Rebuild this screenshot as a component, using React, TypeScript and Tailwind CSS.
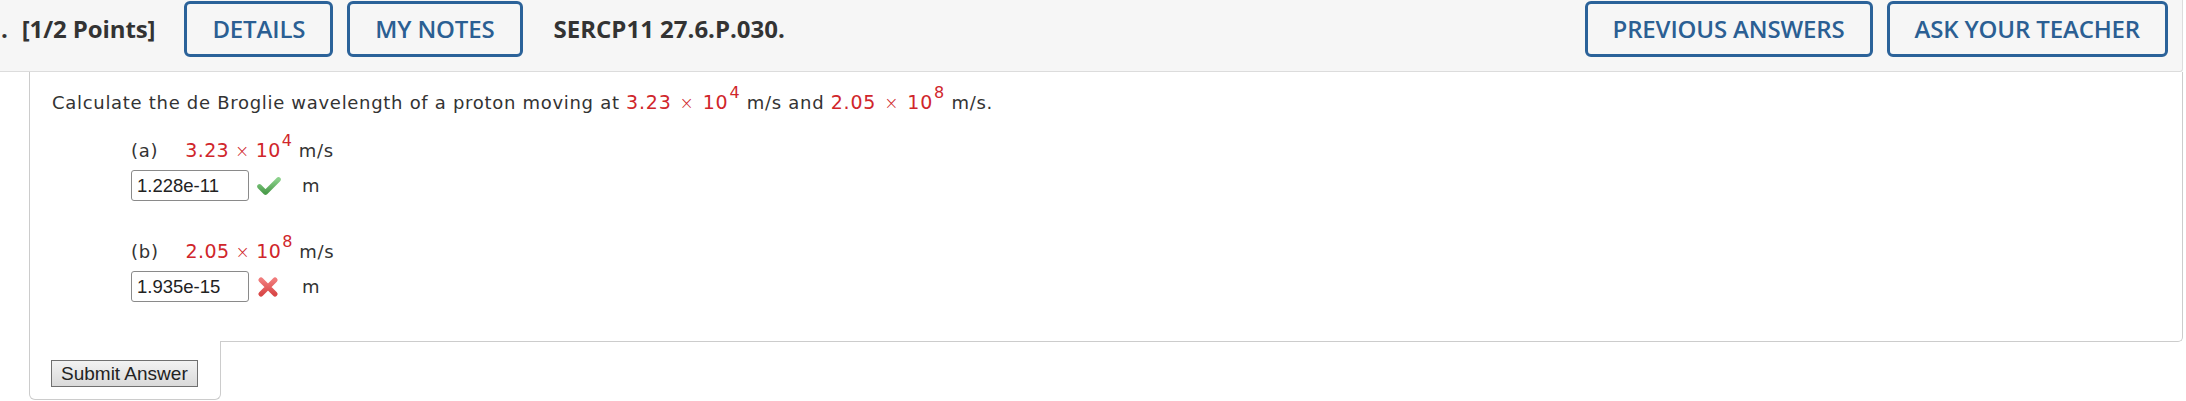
import React from "react";

const headerFont = { fontFamily: '"Open Sans", "Liberation Sans", sans-serif' };

const CheckMark: React.FC = () => (
  <svg width="24" height="20" viewBox="0 0 24 20" className="shrink-0">
    <defs>
      <linearGradient id="okGrad" x1="0" y1="0" x2="0" y2="1">
        <stop offset="0" stopColor="#8ad08a" />
        <stop offset="1" stopColor="#4c9d4c" />
      </linearGradient>
    </defs>
    <path
      d="M2.5 10.5 L8.5 16.5 L21.5 3.5"
      fill="none"
      stroke="url(#okGrad)"
      strokeWidth="4.6"
      strokeLinecap="round"
      strokeLinejoin="round"
    />
  </svg>
);

const CrossMark: React.FC = () => (
  <svg width="22" height="22" viewBox="0 0 22 22" className="shrink-0">
    <defs>
      <linearGradient id="badGrad" x1="0" y1="0" x2="0" y2="1">
        <stop offset="0" stopColor="#f07a7a" />
        <stop offset="1" stopColor="#d94848" />
      </linearGradient>
    </defs>
    <path
      d="M4 4 L18 18 M18 4 L4 18"
      fill="none"
      stroke="url(#badGrad)"
      strokeWidth="5.2"
      strokeLinecap="round"
    />
  </svg>
);

const HeaderButton: React.FC<{ label: string }> = ({ label }) => (
  <button
    className="h-[56px] px-[25px] rounded-[6px] border-[3px] border-[#2b6299] bg-[#f6f6f6] text-[24px] font-semibold text-[#2b5f93] tracking-[-0.15px]"
    style={headerFont}
  >
    {label}
  </button>
);

// red value like 3.23 × 10^4
const Value: React.FC<{ num: string; exp: string; wide?: boolean }> = ({ num, exp, wide }) => (
  <span className={`text-[#d0262b] text-[19px] ${wide ? "tracking-[0.8px]" : "tracking-[0.4px]"}`}>
    {num}
    <span className={`${wide ? "mx-[8px]" : "mx-[6px]"} text-[17px] font-light`}>×</span>
    10
    <sup className="ml-[1px] text-[16px] -top-[0.7em]">{exp}</sup>
  </span>
);

const Part: React.FC<{
  letter: string;
  num: string;
  exp: string;
  answer: string;
  correct: boolean;
}> = ({ letter, num, exp, answer, correct }) => (
  <div className="ml-[79px]">
    <div className="leading-[27px] whitespace-pre">
      <span>({letter})</span>
      <span className="ml-[27px]">
        <Value num={num} exp={exp} />
      </span>{" "}
      m/s
    </div>
    <div className="flex items-center mt-[5px]">
      <div
        className="w-[118px] h-[31px] border border-[#8a8a8a] rounded-[3px] bg-white px-[5px] flex items-center text-[18.5px] tracking-normal text-[#222]"
        style={{ fontFamily: '"Liberation Sans", Arial, sans-serif' }}
      >
        {answer}
      </div>
      <div className="w-[53px] flex items-center pl-[8px]">
        {correct ? <CheckMark /> : <CrossMark />}
      </div>
      <span>m</span>
    </div>
  </div>
);

export default function App() {
  return (
    <div className="w-[2186px] h-[401px] bg-white overflow-hidden">
      {/* Header */}
      <div
        className="w-[2183px] h-[72px] bg-[#f6f6f6] border-b border-r border-[#dcdcdc] rounded-br-[3px] flex items-start pt-px"
        style={headerFont}
      >
        <div className="h-[56px] flex items-center text-[24px] font-bold text-[#333] whitespace-pre tracking-[-0.1px]">
          <span className="ml-[1px]">.</span>
          <span className="ml-[14px]">[1/2 Points]</span>
        </div>
        <div className="ml-[29px] flex gap-[14px]">
          <HeaderButton label="DETAILS" />
          <HeaderButton label="MY NOTES" />
        </div>
        <div className="ml-[31px] h-[56px] flex items-center text-[24px] font-bold text-[#333] tracking-[0px]">
          SERCP11 27.6.P.030.
        </div>
        <div className="ml-auto mr-[14px] flex gap-[14px]">
          <HeaderButton label="PREVIOUS ANSWERS" />
          <HeaderButton label="ASK YOUR TEACHER" />
        </div>
      </div>

      {/* Question */}
      <div className="ml-[29px] w-[2154px]">
        <div
          className="h-[270px] border-x border-b border-[#cccccc] rounded-br-[5px] pl-[22px] pt-[17px] text-[18px] tracking-[0.7px] text-[#333]"
          style={{ fontFamily: '"DejaVu Sans", Verdana, sans-serif' }}
        >
          <p className="leading-[27px] whitespace-pre">
            Calculate the de Broglie wavelength of a proton moving at{" "}
            <Value num="3.23" exp="4" wide /> m/s and <Value num="2.05" exp="8" wide /> m/s.
          </p>
          <div className="mt-[20px]">
            <Part letter="a" num="3.23" exp="4" answer="1.228e-11" correct />
          </div>
          <div className="mt-[37px]">
            <Part letter="b" num="2.05" exp="8" answer="1.935e-15" correct={false} />
          </div>
        </div>
        <div className="-mt-px w-[192px] h-[59px] bg-white border-x border-b border-[#cccccc] rounded-b-[6px] pl-[21px] pt-[19px]">
          <button
            className="h-[27px] px-[9px] border border-[#707070] bg-gradient-to-b from-[#f2f2f2] to-[#dadada] text-[19px] leading-none text-[#222]"
            style={{ fontFamily: '"Liberation Sans", Arial, sans-serif' }}
          >
            Submit Answer
          </button>
        </div>
      </div>
    </div>
  );
}
